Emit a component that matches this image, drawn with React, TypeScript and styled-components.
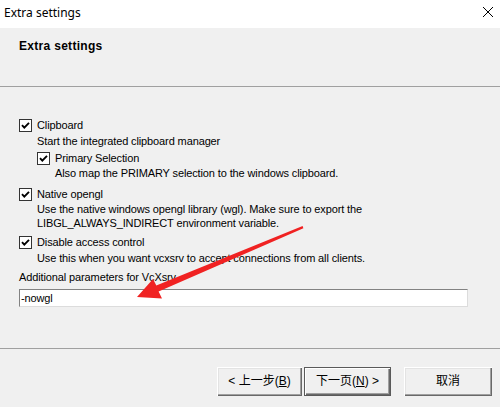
import React from "react";
import styled, { createGlobalStyle } from "styled-components";

const Global = createGlobalStyle`
  html, body { margin: 0; padding: 0; background: #f0f0f0; }
  body { width: 500px; height: 407px; overflow: hidden; }
  * { box-sizing: border-box; }
`;

const UI_FONT = `"Liberation Sans", Arial, sans-serif`;
const CJK_FONT = `"Liberation Sans", "Noto Sans CJK SC", sans-serif`;

const Window = styled.div`
  position: relative;
  width: 500px;
  height: 407px;
  background: #f0f0f0;
  display: flex;
  flex-direction: column;
  font-family: ${UI_FONT};
  color: #000;
`;

const TitleBar = styled.div`
  flex: none;
  height: 28px;
  background: #fff;
  display: flex;
  align-items: center;
  justify-content: space-between;
  padding: 0 6px 0 4px;
`;

const TitleText = styled.span`
  font-family: "Noto Sans", "Open Sans", sans-serif;
  font-size: 12px;
  line-height: 16px;
  margin-top: -2px;
`;

const CloseIcon = styled.svg`
  width: 12px;
  height: 12px;
  margin-top: -4px;
`;

const Header = styled.div`
  flex: none;
  height: 59px;
  padding: 11px 0 0 19px;
  border-bottom: 1px solid #a0a0a0;
`;

const Heading = styled.div`
  font-weight: bold;
  font-size: 12px;
  letter-spacing: 0.3px;
  line-height: 14px;
`;

const Body = styled.div`
  flex: none;
  height: 261px;
  padding: 31px 32px 0 19px;
`;

const Option = styled.div<{ $top?: number; $indent?: boolean }>`
  margin-top: ${(p) => p.$top ?? 0}px;
  padding-left: ${(p) => (p.$indent ? 18 : 0)}px;
`;

const CheckRow = styled.label`
  display: flex;
  align-items: center;
  gap: 5px;
  height: 14px;
  font-size: 11px;
  letter-spacing: -0.12px;
`;

const Box = styled.span`
  width: 13px;
  height: 13px;
  flex: none;
  background: #fff;
  border: 1px solid #333;
  display: flex;
  align-items: center;
  justify-content: center;
`;

const Desc = styled.div<{ $top?: number }>`
  margin-top: ${(p) => p.$top ?? 1}px;
  padding-left: 18px;
  font-size: 11px;
  letter-spacing: -0.12px;
  line-height: 14px;
`;

const FieldLabel = styled.div`
  margin-top: 5px;
  font-size: 11px;
  letter-spacing: -0.12px;
  line-height: 14px;
`;

const TextField = styled.div`
  margin-top: 5px;
  width: 449px;
  height: 18px;
  background: #fff;
  border-top: 1px solid #828282;
  border-left: 1px solid #828282;
  border-right: 1px solid #dcdcdc;
  border-bottom: 1px solid #dcdcdc;
  padding-left: 1px;
  font-size: 11px;
  letter-spacing: -0.12px;
  line-height: 16px;
`;

const Footer = styled.div`
  flex: 1;
  border-top: 1px solid #a0a0a0;
  display: flex;
  justify-content: flex-end;
  align-items: flex-start;
  padding: 18px 8px 0 0;
`;

const Button = styled.button<{ $w: number; $gap?: number; $default?: boolean }>`
  width: ${(p) => p.$w}px;
  height: 29px;
  margin-left: ${(p) => p.$gap ?? 0}px;
  padding: 0;
  background: #f0f0f0;
  font-family: ${CJK_FONT};
  font-size: 12px;
  color: #000;
  border: ${(p) => (p.$default ? "1px solid #5a5a5a" : "none")};
  box-shadow: ${(p) =>
    p.$default
      ? "inset 1px 1px 0 #fff, inset -1px -1px 0 #696969, inset -2px -2px 0 #a0a0a0"
      : "inset 1px 1px 0 #fff, inset -1px -1px 0 #696969, inset -2px -2px 0 #a0a0a0, inset 2px 2px 0 #e3e3e3"};
  text-align: center;
  line-height: 27px;
  white-space: pre;
`;

const Overlay = styled.svg`
  position: absolute;
  left: 0;
  top: 0;
  width: 500px;
  height: 407px;
  pointer-events: none;
`;

function Check() {
  return (
    <Box>
      <svg width="9" height="9" viewBox="0 0 9 9">
        <path d="M1 4.2 L3.3 6.6 L8 1.8" fill="none" stroke="#000" strokeWidth="1.9" />
      </svg>
    </Box>
  );
}

export default function App() {
  return (
    <Window>
      <Global />
      <TitleBar>
        <TitleText>Extra settings</TitleText>
        <CloseIcon viewBox="0 0 12 12">
          <path d="M1 1 L11 11 M11 1 L1 11" stroke="#000" strokeWidth="1" />
        </CloseIcon>
      </TitleBar>
      <Header>
        <Heading>Extra settings</Heading>
      </Header>
      <Body>
        <Option>
          <CheckRow>
            <Check />
            Clipboard
          </CheckRow>
          <Desc $top={2}>Start the integrated clipboard manager</Desc>
          <Option $indent $top={3}>
            <CheckRow>
              <Check />
              Primary Selection
            </CheckRow>
            <Desc>Also map the PRIMARY selection to the windows clipboard.</Desc>
          </Option>
        </Option>
        <Option $top={7}>
          <CheckRow>
            <Check />
            Native opengl
          </CheckRow>
          <Desc>
            Use the native windows opengl library (wgl). Make sure to export the
            <br />
            LIBGL_ALWAYS_INDIRECT environment variable.
          </Desc>
        </Option>
        <Option $top={5}>
          <CheckRow>
            <Check />
            Disable access control
          </CheckRow>
          <Desc $top={2}>Use this when you want vcxsrv to accept connections from all clients.</Desc>
        </Option>
        <FieldLabel>Additional parameters for VcXsrv</FieldLabel>
        <TextField>-nowgl</TextField>
      </Body>
      <Footer>
        <Button $w={85}>
          <span>{"< 上一步("}<u>B</u>{")"}</span>
        </Button>
        <Button $w={87} $gap={2} $default>
          <span>{"下一页("}<u>N</u>{") >"}</span>
        </Button>
        <Button $w={88} $gap={13}>
          <span>取消</span>
        </Button>
      </Footer>
      <Overlay viewBox="0 0 500 407">
        <polygon
          points="137,297 153,279 156.3,285.6 302.6,226 303.4,228.2 158.6,291.4 162,298.5"
          fill="#f02222"
        />
      </Overlay>
    </Window>
  );
}
